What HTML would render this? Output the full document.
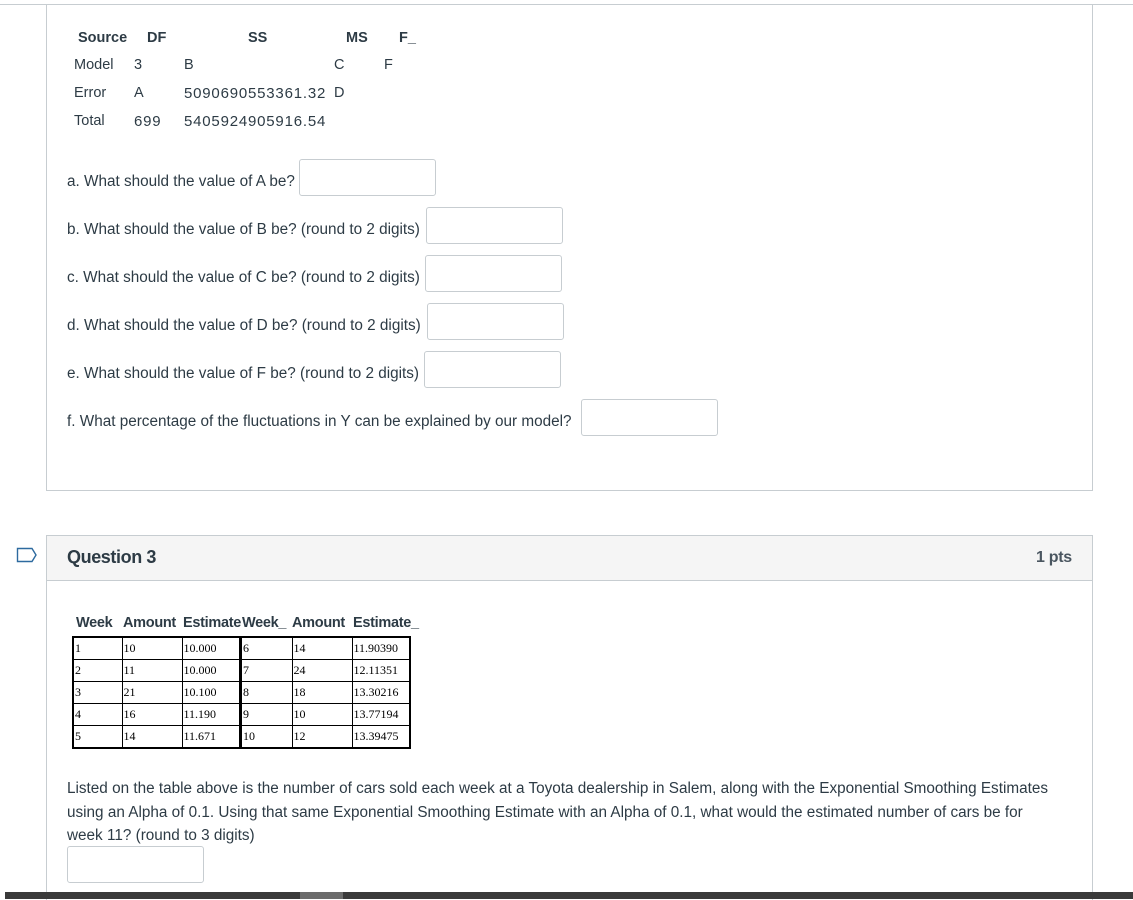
<!DOCTYPE html>
<html><head><style>
body{margin:0;width:1133px;height:899px;position:relative;background:#fff;font-family:"Liberation Sans",sans-serif;color:#2d3b45;overflow:hidden}
.a{position:absolute;white-space:nowrap}
.t{font-size:14.5px}
.n{font-size:15px;letter-spacing:0.8px}
.in{position:absolute;width:135px;height:35px;border:1px solid #c7cdd1;border-radius:3px;background:#fff}
.q{font-size:15.3px}
table.d{position:absolute;border-collapse:collapse;font-family:"Liberation Serif",serif;font-size:12px;color:#000}
table.d td{border:1px solid #000;height:21px;padding:0 0 0 1px;vertical-align:middle}
.h{font-size:14.5px;font-weight:bold;letter-spacing:-0.3px}
</style></head><body>
<div class="a" style="left:0;top:4px;width:1133px;height:1px;background:#c7cdd1"></div>
<div class="a" style="left:46px;top:4px;width:1045px;height:486px;border:1px solid #c7cdd1;border-top:none"></div>

<div class="a t" style="left:78px;top:30px;font-weight:bold">Source</div>
<div class="a t" style="left:147px;top:30px;font-weight:bold">DF</div>
<div class="a t" style="left:248px;top:30px;font-weight:bold">SS</div>
<div class="a t" style="left:346px;top:30px;font-weight:bold">MS</div>
<div class="a t" style="left:399px;top:30px;font-weight:bold">F_</div>
<div class="a t" style="left:74px;top:57px">Model</div><div class="a t" style="left:134px;top:57px">3</div><div class="a t" style="left:184px;top:57px">B</div><div class="a t" style="left:334px;top:57px">C</div><div class="a t" style="left:384px;top:57px">F</div>
<div class="a t" style="left:74px;top:85px">Error</div><div class="a t" style="left:134px;top:85px">A</div><div class="a n" style="left:184px;top:85px">5090690553361.32</div><div class="a t" style="left:334px;top:85px">D</div>
<div class="a t" style="left:74px;top:113px">Total</div><div class="a n" style="left:134px;top:113px">699</div><div class="a n" style="left:184px;top:113px">5405924905916.54</div>

<div class="a q" style="left:67px;top:173px">a. What should the value of A be?</div><div class="in" style="left:299px;top:159px"></div>
<div class="a q" style="left:67px;top:221px">b. What should the value of B be? (round to 2 digits)</div><div class="in" style="left:426px;top:207px"></div>
<div class="a q" style="left:67px;top:269px">c. What should the value of C be? (round to 2 digits)</div><div class="in" style="left:425px;top:255px"></div>
<div class="a q" style="left:67px;top:317px">d. What should the value of D be? (round to 2 digits)</div><div class="in" style="left:427px;top:303px"></div>
<div class="a q" style="left:67px;top:365px">e. What should the value of F be? (round to 2 digits)</div><div class="in" style="left:424px;top:351px"></div>
<div class="a q" style="left:67px;top:413px">f. What percentage of the fluctuations in Y can be explained by our model?</div><div class="in" style="left:581px;top:399px"></div>

<svg class="a" style="left:16px;top:547px" width="22" height="16"><path d="M1.5 1.5H16L20 8L16 14.5H1.5Z" fill="none" stroke="#2d6a9f" stroke-width="1.4"/></svg>
<div class="a" style="left:46px;top:535px;width:1045px;height:364px;border:1px solid #c7cdd1;border-bottom:none"></div>
<div class="a" style="left:47px;top:536px;width:1045px;height:44px;background:#f5f5f5;border-bottom:1px solid #c7cdd1"></div>
<div class="a" style="left:67px;top:547px;font-size:18px;font-weight:bold;letter-spacing:-0.4px">Question 3</div>
<div class="a" style="left:1036px;top:549px;font-size:16px;font-weight:bold;color:#4a5660;letter-spacing:-0.3px">1 pts</div>

<div class="a h" style="left:76px;top:615px">Week</div>
<div class="a h" style="left:123px;top:615px">Amount</div>
<div class="a h" style="left:183px;top:615px">Estimate</div>
<div class="a h" style="left:242px;top:615px">Week_</div>
<div class="a h" style="left:292px;top:615px">Amount</div>
<div class="a h" style="left:353px;top:615px">Estimate_</div>

<table class="d" style="left:72px;top:636px;border:2px solid #000">
<colgroup><col style="width:49px"><col style="width:60px"><col style="width:58px"></colgroup>
<tr><td>1</td><td>10</td><td>10.000</td></tr><tr><td>2</td><td>11</td><td>10.000</td></tr><tr><td>3</td><td>21</td><td>10.100</td></tr><tr><td>4</td><td>16</td><td>11.190</td></tr><tr><td>5</td><td>14</td><td>11.671</td></tr>
</table>
<table class="d" style="left:240px;top:636px;border:2px solid #000">
<colgroup><col style="width:51px"><col style="width:60px"><col style="width:58px"></colgroup>
<tr><td>6</td><td>14</td><td>11.90390</td></tr><tr><td>7</td><td>24</td><td>12.11351</td></tr><tr><td>8</td><td>18</td><td>13.30216</td></tr><tr><td>9</td><td>10</td><td>13.77194</td></tr><tr><td>10</td><td>12</td><td>13.39475</td></tr>
</table>

<div class="a q" style="left:67px;top:777px;line-height:23.5px;white-space:normal;width:995px">Listed on the table above is the number of cars sold each week at a Toyota dealership in Salem, along with the Exponential Smoothing Estimates using an Alpha of 0.1. Using that same Exponential Smoothing Estimate with an Alpha of 0.1, what would the estimated number of cars be for week 11? (round to 3 digits)</div>
<div class="in" style="left:67px;top:846px"></div>

<div class="a" style="left:5px;top:892px;width:1128px;height:7px;background:#3a3a3a"></div>
<div class="a" style="left:300px;top:892px;width:43px;height:7px;background:#6b6b6b"></div>
</body></html>
